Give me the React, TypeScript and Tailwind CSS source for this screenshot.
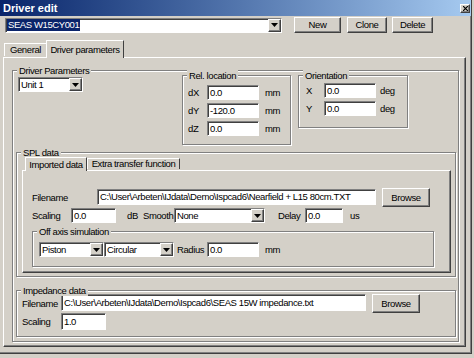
import type { ReactNode } from "react";

const sunken =
  "bg-white border border-t-[#808080] border-l-[#808080] border-r-white border-b-white shadow-[inset_1px_1px_0_#404040]";
const raised =
  "bg-[#d4d0c8] border border-t-white border-l-white border-r-[#404040] border-b-[#404040] shadow-[inset_-1px_-1px_0_#808080]";

function Arrow() {
  return (
    <svg width="7" height="4" viewBox="0 0 7 4" className="block">
      <path d="M0 0h7L3.5 4z" fill="#000" />
    </svg>
  );
}

function Field({ value, className = "" }: { value: string; className?: string }) {
  return (
    <div className={`${sunken} flex items-center pl-[2px] overflow-hidden whitespace-nowrap ${className}`}>{value}</div>
  );
}

function Combo({ value, className = "", selected = false }: { value: string; className?: string; selected?: boolean }) {
  return (
    <div className={`${sunken} flex items-center justify-between overflow-hidden ${className}`}>
      <span className={`ml-[1px] px-[1px] py-[1px] whitespace-nowrap ${selected ? "bg-[#0a246a] text-white" : ""}`}>{value}</span>
      <div className={`${raised} w-[13px] h-full flex items-center justify-center shrink-0`}>
        <Arrow />
      </div>
    </div>
  );
}

function Button({ label, className = "" }: { label: string; className?: string }) {
  return <div className={`${raised} flex items-center justify-center whitespace-nowrap ${className}`}>{label}</div>;
}

function Group({ label, className = "", children }: { label: string; className?: string; children?: ReactNode }) {
  return (
    <div className={`relative border border-[#808080] shadow-[inset_1px_1px_0_#fff,1px_1px_0_#fff] ${className}`}>
      <span className="absolute -top-[6px] left-[4px] px-[2px] bg-[#d4d0c8] leading-[11px] whitespace-nowrap">{label}</span>
      {children}
    </div>
  );
}

function Tab({ label, active, className = "" }: { label: string; active?: boolean; className?: string }) {
  return (
    <div
      className={`flex items-center justify-center whitespace-nowrap border-t border-l border-r border-t-white border-l-white border-r-[#404040] bg-[#d4d0c8] ${
        active ? "relative z-10 -mb-px" : ""
      } ${className}`}
    >
      {label}
    </div>
  );
}

function Panel({ className = "", children }: { className?: string; children?: ReactNode }) {
  return (
    <div
      className={`border border-t-white border-l-white border-r-[#404040] border-b-[#404040] shadow-[inset_-1px_-1px_0_#808080] ${className}`}
    >
      {children}
    </div>
  );
}

export default function App() {
  return (
    <div
      className="w-[474px] h-[358px] bg-[#d4d0c8] overflow-hidden text-[9.5px] tracking-[-0.4px] text-black leading-none"
      style={{ fontFamily: "'Liberation Sans', Arial, sans-serif" }}
    >
      <div className="w-[472px] h-[354px] flex flex-col border-r border-b border-r-[#404040] border-b-[#404040] shadow-[inset_-1px_-1px_0_#808080]">
        {/* Title bar */}
        <div className="h-[16px] flex items-center justify-between bg-gradient-to-r from-[#0a246a] to-[#a6caf0] pl-[3px] pr-[1px]">
          <span className="text-white font-bold text-[11px] tracking-normal">Driver edit</span>
          <div className={`${raised} w-[10px] h-[9px] flex items-center justify-center`}>
            <svg width="5" height="5" viewBox="0 0 5 5">
              <path d="M0 0L5 5M5 0L0 5" stroke="#000" strokeWidth="1.2" />
            </svg>
          </div>
        </div>

        {/* Driver selector */}
        <div className="h-[16px] mt-[1px] flex items-center pl-[5px]">
          <Combo value="SEAS W15CY001" selected className="w-[277px] h-[15px]" />
          <Button label="New" className="ml-[12px] w-[47px] h-[16px]" />
          <Button label="Clone" className="ml-[6px] w-[40px] h-[16px]" />
          <Button label="Delete" className="ml-[5px] w-[41px] h-[16px]" />
        </div>

        {/* Tabs */}
        <div className="mt-[7px] h-[17px] flex items-end pl-[4px]">
          <Tab label="General" className="w-[43px] h-[13px] mb-px" />
          <Tab label="Driver parameters" active className="w-[78px] h-[18px] -ml-px" />
        </div>

        <Panel className="ml-[3px] w-[463px] h-[290px] pl-[8px] pt-[12px]">
          <Group label="Driver Parameters" className="w-[447px] h-[272px]">
            <div className="flex items-start pt-[4px]">
              <Combo value="Unit 1" className="ml-[5px] mt-[2px] w-[65px] h-[15px]" />

              <Group label="Rel. location" className="ml-[99px] w-[109px] h-[70px]">
                <div className="flex flex-col gap-[3px] pt-[9px] pl-[5px]">
                  {[
                    ["dX", "0.0"],
                    ["dY", "-120.0"],
                    ["dZ", "0.0"],
                  ].map(([l, v]) => (
                    <div key={l} className="flex items-center h-[15px]">
                      <span className="w-[19px]">{l}</span>
                      <Field value={v} className="w-[52px] h-[15px]" />
                      <span className="ml-[6px]">mm</span>
                    </div>
                  ))}
                </div>
              </Group>

              <Group label="Orientation" className="ml-[7px] w-[110px] h-[53px]">
                <div className="flex flex-col gap-[3px] pt-[7px] pl-[7px]">
                  {["X", "Y"].map((l) => (
                    <div key={l} className="flex items-center h-[15px]">
                      <span className="w-[18px]">{l}</span>
                      <Field value="0.0" className="w-[52px] h-[15px]" />
                      <span className="ml-[4px]">deg</span>
                    </div>
                  ))}
                </div>
              </Group>
            </div>

            {/* SPL data */}
            <Group label="SPL data" className="ml-[3px] mt-[7px] w-[440px] h-[125px]">
              <div className="pt-[4px] pl-[8px] h-[17px] flex items-end">
                <Tab label="Imported data" active className="w-[62px] h-[14px]" />
                <Tab label="Extra transfer function" className="w-[93px] h-[11px] mb-px" />
              </div>
              <Panel className="ml-[5px] w-[429px] h-[103px] pl-[9px] pt-[17px]">
                <div className="flex items-start h-[19px]">
                  <span className="w-[65px] mt-[5px]">Filename</span>
                  <Field value="C:\User\Arbeten\IJdata\Demo\Ispcad6\Nearfield + L15 80cm.TXT" className="mt-[1px] w-[279px] h-[16px]" />
                  <Button label="Browse" className="ml-[6px] w-[48px] h-[19px]" />
                </div>
                <div className="flex items-center h-[15px] mt-[1px] whitespace-nowrap">
                  <span className="w-[39px]">Scaling</span>
                  <Field value="0.0" className="w-[45px] h-[15px]" />
                  <span className="ml-[11px] w-[16px]">dB</span>
                  <span className="w-[31px]">Smooth</span>
                  <Combo value="None" className="w-[91px] h-[15px]" />
                  <span className="ml-[13px] w-[27px]">Delay</span>
                  <Field value="0.0" className="w-[38px] h-[15px]" />
                  <span className="ml-[7px]">us</span>
                </div>
                <Group label="Off axis simulation" className="mt-[8px] w-[402px] h-[36px]">
                  <div className="flex items-center pt-[10px] pl-[6px] whitespace-nowrap">
                    <Combo value="Piston" className="w-[65px] h-[15px]" />
                    <Combo value="Circular" className="w-[70px] h-[15px]" />
                    <span className="ml-[3px] w-[30px]">Radius</span>
                    <Field value="0.0" className="w-[52px] h-[15px]" />
                    <span className="ml-[6px]">mm</span>
                  </div>
                </Group>
              </Panel>
            </Group>

            {/* Impedance data */}
            <Group label="Impedance data" className="ml-[3px] mt-[13px] w-[440px] h-[47px]">
              <div className="pt-[3px] pl-[5px]">
                <div className="flex items-start h-[19px]">
                  <span className="w-[39px] mt-[5px]">Filename</span>
                  <Field value="C:\User\Arbeten\IJdata\Demo\Ispcad6\SEAS 15W impedance.txt" className="w-[305px] h-[17px]" />
                  <Button label="Browse" className="ml-[6px] w-[48px] h-[19px]" />
                </div>
                <div className="flex items-center h-[17px]">
                  <span className="w-[39px]">Scaling</span>
                  <Field value="1.0" className="w-[45px] h-[17px]" />
                </div>
              </div>
            </Group>
          </Group>
        </Panel>
      </div>
    </div>
  );
}
